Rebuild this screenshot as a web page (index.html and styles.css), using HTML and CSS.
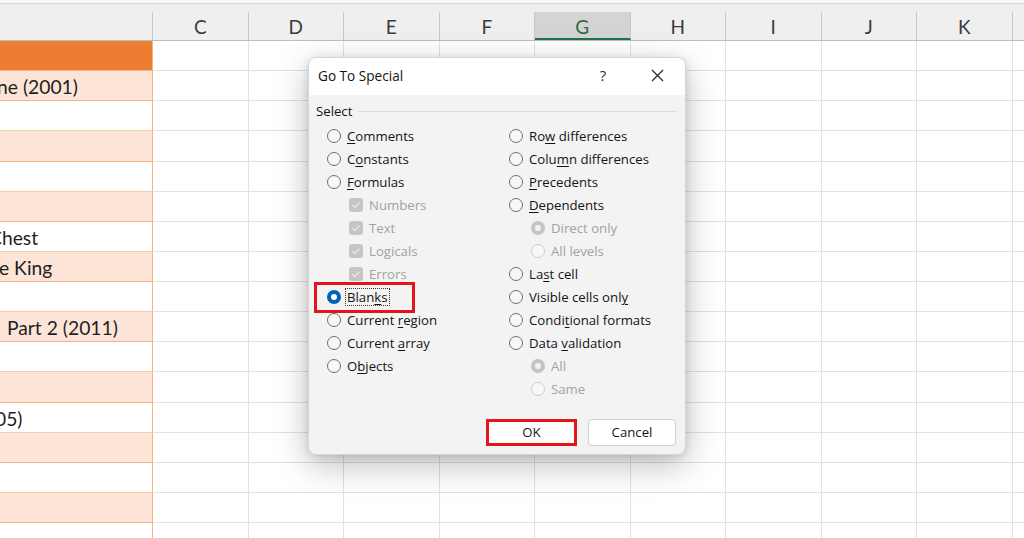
FILE: index.html
```html
<!DOCTYPE html>
<html>
<head>
<meta charset="utf-8">
<link rel="stylesheet" href="styles.css">
</head>
<body>
<div class="sheet">
  <div class="topstrip"></div>
  <div class="colhead">
    <div class="hc hb"></div>
    <div class="hc">C</div><div class="hc">D</div><div class="hc">E</div><div class="hc">F</div>
    <div class="hc sel">G</div><div class="hc">H</div><div class="hc">I</div><div class="hc">J</div>
    <div class="hc">K</div><div class="hc hl"></div>
  </div>
  <div class="rows">
    <div class="row"><div class="cb orange"></div><div class="c"></div><div class="c"></div><div class="c"></div><div class="c"></div><div class="c"></div><div class="c"></div><div class="c"></div><div class="c"></div><div class="c"></div><div class="c l"></div></div>
    <div class="row"><div class="cb peach"><span class="tx o1">ne (2001)</span></div><div class="c"></div><div class="c"></div><div class="c"></div><div class="c"></div><div class="c"></div><div class="c"></div><div class="c"></div><div class="c"></div><div class="c"></div><div class="c l"></div></div>
    <div class="row"><div class="cb"></div><div class="c"></div><div class="c"></div><div class="c"></div><div class="c"></div><div class="c"></div><div class="c"></div><div class="c"></div><div class="c"></div><div class="c"></div><div class="c l"></div></div>
    <div class="row"><div class="cb peach"></div><div class="c"></div><div class="c"></div><div class="c"></div><div class="c"></div><div class="c"></div><div class="c"></div><div class="c"></div><div class="c"></div><div class="c"></div><div class="c l"></div></div>
    <div class="row"><div class="cb"></div><div class="c"></div><div class="c"></div><div class="c"></div><div class="c"></div><div class="c"></div><div class="c"></div><div class="c"></div><div class="c"></div><div class="c"></div><div class="c l"></div></div>
    <div class="row"><div class="cb peach"></div><div class="c"></div><div class="c"></div><div class="c"></div><div class="c"></div><div class="c"></div><div class="c"></div><div class="c"></div><div class="c"></div><div class="c"></div><div class="c l"></div></div>
    <div class="row"><div class="cb"><span class="tx o2">Chest</span></div><div class="c"></div><div class="c"></div><div class="c"></div><div class="c"></div><div class="c"></div><div class="c"></div><div class="c"></div><div class="c"></div><div class="c"></div><div class="c l"></div></div>
    <div class="row"><div class="cb peach"><span class="tx o3">e King</span></div><div class="c"></div><div class="c"></div><div class="c"></div><div class="c"></div><div class="c"></div><div class="c"></div><div class="c"></div><div class="c"></div><div class="c"></div><div class="c l"></div></div>
    <div class="row"><div class="cb"></div><div class="c"></div><div class="c"></div><div class="c"></div><div class="c"></div><div class="c"></div><div class="c"></div><div class="c"></div><div class="c"></div><div class="c"></div><div class="c l"></div></div>
    <div class="row"><div class="cb peach"><span class="tx o4">Part 2 (2011)</span></div><div class="c"></div><div class="c"></div><div class="c"></div><div class="c"></div><div class="c"></div><div class="c"></div><div class="c"></div><div class="c"></div><div class="c"></div><div class="c l"></div></div>
    <div class="row"><div class="cb"></div><div class="c"></div><div class="c"></div><div class="c"></div><div class="c"></div><div class="c"></div><div class="c"></div><div class="c"></div><div class="c"></div><div class="c"></div><div class="c l"></div></div>
    <div class="row"><div class="cb peach"></div><div class="c"></div><div class="c"></div><div class="c"></div><div class="c"></div><div class="c"></div><div class="c"></div><div class="c"></div><div class="c"></div><div class="c"></div><div class="c l"></div></div>
    <div class="row"><div class="cb"><span class="tx o5">05)</span></div><div class="c"></div><div class="c"></div><div class="c"></div><div class="c"></div><div class="c"></div><div class="c"></div><div class="c"></div><div class="c"></div><div class="c"></div><div class="c l"></div></div>
    <div class="row"><div class="cb peach"></div><div class="c"></div><div class="c"></div><div class="c"></div><div class="c"></div><div class="c"></div><div class="c"></div><div class="c"></div><div class="c"></div><div class="c"></div><div class="c l"></div></div>
    <div class="row"><div class="cb"></div><div class="c"></div><div class="c"></div><div class="c"></div><div class="c"></div><div class="c"></div><div class="c"></div><div class="c"></div><div class="c"></div><div class="c"></div><div class="c l"></div></div>
    <div class="row"><div class="cb peach"></div><div class="c"></div><div class="c"></div><div class="c"></div><div class="c"></div><div class="c"></div><div class="c"></div><div class="c"></div><div class="c"></div><div class="c"></div><div class="c l"></div></div>
    <div class="row"><div class="cb"></div><div class="c"></div><div class="c"></div><div class="c"></div><div class="c"></div><div class="c"></div><div class="c"></div><div class="c"></div><div class="c"></div><div class="c"></div><div class="c l"></div></div>
  </div>
</div>

<div class="dialog">
  <div class="titlebar">
    <div class="title">Go To Special</div>
    <div class="tbtn">?</div>
    <div class="tbtn"><svg width="13" height="13" viewBox="0 0 13 13"><path d="M1 1L12 12M12 1L1 12" stroke="#2b2b2b" stroke-width="1.3" fill="none"/></svg></div>
  </div>
  <div class="body">
    <div class="legend"><span>Select</span><span class="gline"></span></div>
    <div class="options">
      <div class="col">
        <div class="opt"><span class="radio"></span><span><u>C</u>omments</span></div>
        <div class="opt"><span class="radio"></span><span>C<u>o</u>nstants</span></div>
        <div class="opt"><span class="radio"></span><span><u>F</u>ormulas</span></div>
        <div class="opt sub dis"><span class="check"><svg width="14" height="14" viewBox="0 0 14 14"><path d="M3.5 7.2L5.9 9.5L10.5 4.6" stroke="#ececec" stroke-width="1.2" fill="none"/></svg></span><span>Numbers</span></div>
        <div class="opt sub dis"><span class="check"><svg width="14" height="14" viewBox="0 0 14 14"><path d="M3.5 7.2L5.9 9.5L10.5 4.6" stroke="#ececec" stroke-width="1.2" fill="none"/></svg></span><span>Text</span></div>
        <div class="opt sub dis"><span class="check"><svg width="14" height="14" viewBox="0 0 14 14"><path d="M3.5 7.2L5.9 9.5L10.5 4.6" stroke="#ececec" stroke-width="1.2" fill="none"/></svg></span><span>Logicals</span></div>
        <div class="opt sub dis"><span class="check"><svg width="14" height="14" viewBox="0 0 14 14"><path d="M3.5 7.2L5.9 9.5L10.5 4.6" stroke="#ececec" stroke-width="1.2" fill="none"/></svg></span><span>Errors</span></div>
        <div class="opt"><span class="radio on"></span><span class="focus">Blan<u>k</u>s</span></div>
        <div class="opt"><span class="radio"></span><span>Current <u>r</u>egion</span></div>
        <div class="opt"><span class="radio"></span><span>Current <u>a</u>rray</span></div>
        <div class="opt"><span class="radio"></span><span>O<u>b</u>jects</span></div>
      </div>
      <div class="col">
        <div class="opt"><span class="radio"></span><span>Ro<u>w</u> differences</span></div>
        <div class="opt"><span class="radio"></span><span>Colu<u>m</u>n differences</span></div>
        <div class="opt"><span class="radio"></span><span><u>P</u>recedents</span></div>
        <div class="opt"><span class="radio"></span><span><u>D</u>ependents</span></div>
        <div class="opt sub2 dis"><span class="radio dison"></span><span>Direct only</span></div>
        <div class="opt sub2 dis"><span class="radio disoff"></span><span>All levels</span></div>
        <div class="opt"><span class="radio"></span><span>La<u>s</u>t cell</span></div>
        <div class="opt"><span class="radio"></span><span>Visible cells onl<u>y</u></span></div>
        <div class="opt"><span class="radio"></span><span>Condi<u>t</u>ional formats</span></div>
        <div class="opt"><span class="radio"></span><span>Data <u>v</u>alidation</span></div>
        <div class="opt sub2 dis"><span class="radio dison"></span><span>All</span></div>
        <div class="opt sub2 dis"><span class="radio disoff"></span><span>Same</span></div>
      </div>
    </div>
    <div class="buttons">
      <div class="btn ok">OK</div>
      <div class="btn cancel">Cancel</div>
    </div>
  </div>
  <div class="mark"></div>
</div>
</body>
</html>
```

FILE: styles.css
```css
* { box-sizing: border-box; }
html, body { margin: 0; padding: 0; }
body {
  width: 1024px;
  height: 538px;
  overflow: hidden;
  position: relative;
  background: #ffffff;
  font-family: "Open Sans", "Noto Sans", sans-serif;
}

.sheet { width: 1024px; }

.topstrip {
  height: 12px;
  background: linear-gradient(#f7f7f7 0, #f7f7f7 3px, #d9d9d9 3px, #d9d9d9 4px, #efefef 4px);
}

.colhead {
  display: flex;
  height: 29px;
  background: #efefef;
  border-bottom: 1px solid #bdbdbd;
}
.hc {
  flex: none;
  width: 95.5px;
  height: 28px;
  border-right: 1px solid #c8c8c8;
  font-family: "Lato", "Liberation Sans", sans-serif;
  font-size: 19px;
  color: #3a3a3a;
  display: flex;
  align-items: center;
  justify-content: center;
}
.hc.hb { width: 153px; }
.hc.hl { width: 40px; border-right: none; }
.hc.sel {
  background: #d4d4d4;
  color: #2d6a47;
  border-bottom: 2px solid #217346;
  padding-top: 2px;
}

.row {
  display: flex;
  height: 30.13px;
}
.c {
  flex: none;
  width: 95.5px;
  height: 100%;
  border-right: 1px solid #e1e1e1;
  border-bottom: 1px solid #e1e1e1;
}
.c.l { width: 40px; border-right: none; }
.cb {
  flex: none;
  width: 153px;
  height: 100%;
  background: #ffffff;
  border-right: 1px solid #f4b183;
  border-bottom: 1px solid #f8cbad;
  overflow: hidden;
  white-space: nowrap;
  display: flex;
  align-items: center;
  font-family: "Lato", "Liberation Sans", sans-serif;
  font-size: 19.3px;
  color: #1f1f1f;
}
.cb.peach { background: #fce4d6; border-bottom-color: #f4b183; }
.cb.orange { background: #ed7d31; border-bottom-color: #f4b183; }
.tx { flex: none; padding-top: 2px; }
.o1 { margin-left: -3px; }
.o2 { margin-left: -11px; }
.o3 { margin-left: -1px; }
.o4 { margin-left: 7px; }
.o5 { margin-left: -5px; }

/* Dialog */
.dialog {
  position: absolute;
  left: 308px;
  top: 57px;
  width: 378px;
  height: 398px;
  background: #f3f3f3;
  border-radius: 8px;
  border: 1px solid #d6d6d6;
  box-shadow: 0 10px 34px rgba(0, 0, 0, 0.26), 0 2px 8px rgba(0, 0, 0, 0.12);
  font-size: 13.2px;
  color: #141414;
}
.titlebar {
  height: 37px;
  background: #ffffff;
  border-radius: 7px 7px 0 0;
  display: flex;
  align-items: center;
  padding-left: 9px;
  padding-right: 1px;
  padding-bottom: 3px;
}
.title { flex: 1; font-size: 13.6px; color: #141414; }
.tbtn {
  width: 54px;
  height: 30px;
  display: flex;
  align-items: center;
  justify-content: center;
  font-size: 15px;
  color: #2b2b2b;
}

.body { padding: 8px 8px 0 7px; }
.legend {
  display: flex;
  align-items: center;
  gap: 6px;
  height: 16px;
  line-height: 16px;
}
.gline { flex: 1; border-top: 1px solid #dcdcdc; margin-top: 1px; }

.options {
  display: grid;
  grid-template-columns: 182px 1fr;
  margin-top: 5.5px;
  padding-left: 11px;
}
.opt {
  display: flex;
  align-items: center;
  gap: 6px;
  height: 23px;
  white-space: nowrap;
}
.opt u { text-decoration-thickness: 1px; text-underline-offset: 2px; }
.opt.sub { margin-left: 22px; }
.opt.sub2 { margin-left: 22px; }
.opt.dis { color: #a2a2a2; }

.radio {
  flex: none;
  width: 14px;
  height: 14px;
  border-radius: 50%;
  border: 1px solid #6e6e6e;
  background: #f7f7f7;
  position: relative;
}
.radio.on {
  border: none;
  background: #0063b8;
}
.radio.on::after {
  content: "";
  position: absolute;
  left: 4px; top: 4px;
  width: 6px; height: 6px;
  border-radius: 50%;
  background: #ffffff;
}
.radio.dison { border: none; background: #c4c4c4; }
.radio.dison::after {
  content: "";
  position: absolute;
  left: 4px; top: 4px;
  width: 6px; height: 6px;
  border-radius: 50%;
  background: #f2f2f2;
}
.radio.disoff { border-color: #cdcdcd; background: #f7f7f7; }

.check {
  flex: none;
  width: 14px;
  height: 14px;
  border-radius: 3px;
  background: #c6c6c6;
  display: flex;
}

.focus {
  outline: 1px dotted #3a3a3a;
  outline-offset: 0;
  padding: 0 1px;
  margin-left: -1px;
  line-height: 16px;
}

.buttons {
  display: flex;
  justify-content: flex-end;
  gap: 11px;
  margin-top: 18px;
  padding-right: 1px;
}
.btn {
  height: 27px;
  display: flex;
  align-items: center;
  justify-content: center;
  background: #ffffff;
  font-size: 13.2px;
  color: #141414;
}
.btn.ok { width: 91px; border: 3px solid #e3141c; }
.btn.cancel { width: 88px; border: 1px solid #d0d0d0; border-radius: 4px; }

.mark {
  position: absolute;
  left: 5px;
  top: 224px;
  width: 101px;
  height: 31px;
  border: 3px solid #e3141c;
}
```
